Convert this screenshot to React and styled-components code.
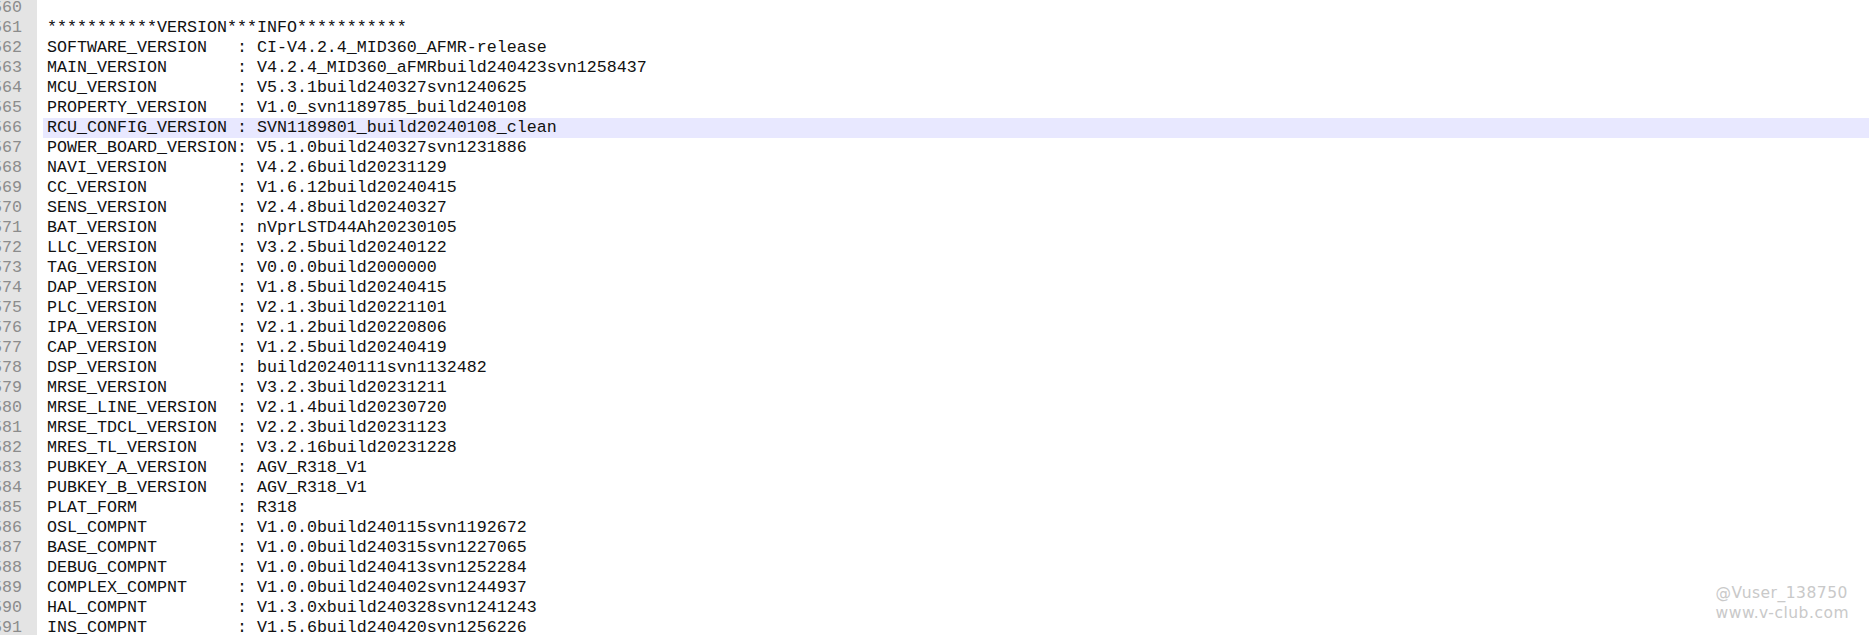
import React from 'react'
import styled, { createGlobalStyle } from 'styled-components'

const versions = [
  [ 'SOFTWARE_VERSION', 'CI-V4.2.4_MID360_AFMR-release' ],
  [ 'MAIN_VERSION', 'V4.2.4_MID360_aFMRbuild240423svn1258437' ],
  [ 'MCU_VERSION', 'V5.3.1build240327svn1240625' ],
  [ 'PROPERTY_VERSION', 'V1.0_svn1189785_build240108' ],
  [ 'RCU_CONFIG_VERSION', 'SVN1189801_build20240108_clean' ],
  [ 'POWER_BOARD_VERSION', 'V5.1.0build240327svn1231886' ],
  [ 'NAVI_VERSION', 'V4.2.6build20231129' ],
  [ 'CC_VERSION', 'V1.6.12build20240415' ],
  [ 'SENS_VERSION', 'V2.4.8build20240327' ],
  [ 'BAT_VERSION', 'nVprLSTD44Ah20230105' ],
  [ 'LLC_VERSION', 'V3.2.5build20240122' ],
  [ 'TAG_VERSION', 'V0.0.0build2000000' ],
  [ 'DAP_VERSION', 'V1.8.5build20240415' ],
  [ 'PLC_VERSION', 'V2.1.3build20221101' ],
  [ 'IPA_VERSION', 'V2.1.2build20220806' ],
  [ 'CAP_VERSION', 'V1.2.5build20240419' ],
  [ 'DSP_VERSION', 'build20240111svn1132482' ],
  [ 'MRSE_VERSION', 'V3.2.3build20231211' ],
  [ 'MRSE_LINE_VERSION', 'V2.1.4build20230720' ],
  [ 'MRSE_TDCL_VERSION', 'V2.2.3build20231123' ],
  [ 'MRES_TL_VERSION', 'V3.2.16build20231228' ],
  [ 'PUBKEY_A_VERSION', 'AGV_R318_V1' ],
  [ 'PUBKEY_B_VERSION', 'AGV_R318_V1' ],
  [ 'PLAT_FORM', 'R318' ],
  [ 'OSL_COMPNT', 'V1.0.0build240115svn1192672' ],
  [ 'BASE_COMPNT', 'V1.0.0build240315svn1227065' ],
  [ 'DEBUG_COMPNT', 'V1.0.0build240413svn1252284' ],
  [ 'COMPLEX_COMPNT', 'V1.0.0build240402svn1244937' ],
  [ 'HAL_COMPNT', 'V1.3.0xbuild240328svn1241243' ],
  [ 'INS_COMPNT', 'V1.5.6build240420svn1256226' ],
]

const lines = [
  '',
  '***********VERSION***INFO***********',
  ...versions.map( ( [ key, value ] ) => `${ key.padEnd( 19 ) }: ${ value }` ),
]

const FIRST_LINE = 560
const CURRENT_LINE = 566

const App = () => {
  return (
    <>
      <GlobalStyle />
      <Editor>
        <Lines>
          { lines.map( ( text, i ) => {
            const num = FIRST_LINE + i
            return (
              <Row key={ num }>
                <LineNo>{ num }</LineNo>
                <Fold />
                <Code $current={ num === CURRENT_LINE }>{ text }</Code>
              </Row>
            )
          } ) }
        </Lines>
        <Watermark>
          <span>@Vuser_138750</span>
          <span>www.v-club.com</span>
        </Watermark>
      </Editor>
    </>
  )
}

export default App

const GlobalStyle = createGlobalStyle`
  html, body {
    margin: 0;
    padding: 0;
    background: #ffffff;
  }
`

const Editor = styled.div`
  position: relative;
  width: 1869px;
  height: 635px;
  overflow: hidden;
  background: #ffffff;
`

const Lines = styled.div`
  display: flex;
  flex-direction: column;
  margin-top: -2px;
`

const Row = styled.div`
  display: flex;
  height: 20px;
`

const LineNo = styled.div`
  flex: 0 0 37px;
  box-sizing: border-box;
  display: flex;
  justify-content: flex-end;
  padding-right: 15px;
  background: #e4e4e4;
  color: #8c8c8c;
  font-family: "Liberation Mono", monospace;
  font-size: 16.67px;
  line-height: 20px;
  overflow: hidden;
  white-space: pre;
`

const Fold = styled.div`
  flex: 0 0 6px;
  background: #ffffff;
`

const Code = styled.div`
  flex: 1;
  padding-left: 4px;
  background: ${ p => p.$current ? '#e8e8ff' : '#ffffff' };
  color: #111111;
  font-family: "Liberation Mono", monospace;
  font-size: 16.67px;
  line-height: 20px;
  white-space: pre;
`

const Watermark = styled.div`
  position: absolute;
  right: 20px;
  bottom: 12px;
  display: flex;
  flex-direction: column;
  color: #c9c9c9;
  font-family: "DejaVu Sans", sans-serif;
  font-size: 15.5px;
  letter-spacing: 0.5px;
  line-height: 20px;
`
